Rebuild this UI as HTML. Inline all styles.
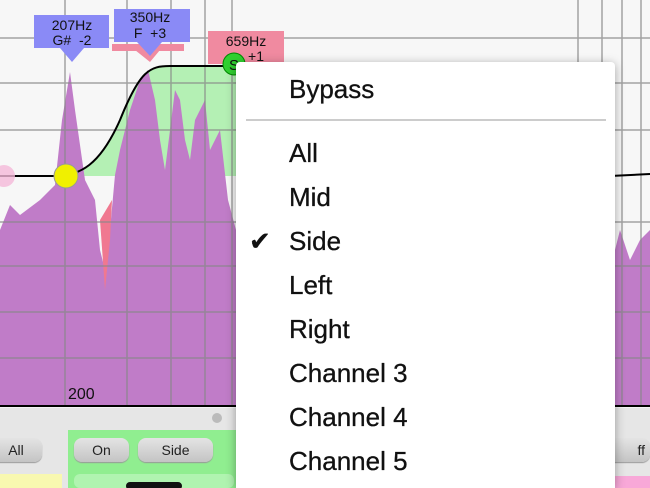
<!DOCTYPE html>
<html style="overflow:hidden;width:650px;height:488px"><head><meta charset="utf-8"><style>
body{margin:0;width:650px;height:488px;overflow:hidden;background:#f4f4f4;font-family:"Liberation Sans",sans-serif;position:relative}
.menu{position:absolute;left:236px;top:62px;width:379px;height:426px;background:#fff;box-shadow:0 2px 10px rgba(0,0,0,.35);border-radius:4px 4px 0 0}
.it{position:absolute;left:53px;font-size:26px;color:#111;line-height:30px;-webkit-text-stroke:0.3px #111}
.btn{position:absolute;height:24px;border-radius:8px;background:linear-gradient(#e4e4e4,#c4c4c4);font-size:14px;text-align:center;line-height:24px;color:#222;box-shadow:0 1px 1px #999}
</style></head><body>
<svg width="650" height="488" style="position:absolute;left:0;top:0">
<rect x="0" y="0" width="650" height="407" fill="#f7f7f7"/>
<path d="M55,176 C80,176 100,165 120,120 C140,70 150,66 170,66 L240,66 L240,176 Z" fill="#b4f0b4"/>
<polygon points="0,407 0,230 10,205 20,215 40,200 55,185 62,120 70,72 75,110 85,180 95,200 100,250 105,270 110,230 115,175 120,150 130,110 140,80 148,70 155,100 160,140 165,170 175,90 180,100 185,140 190,160 195,120 205,100 210,150 220,130 228,200 236,230 236,407" fill="#c07cc8"/>
<polygon points="100,220 105,290 110,240 112,200" fill="#f07890"/>
<polygon points="578,407 578,235 590,250 600,245 610,270 620,230 630,260 640,240 650,230 650,407" fill="#c07cc8"/>
<g stroke="#888" stroke-width="1.5" opacity=".75">
<line x1="0" y1="38" x2="650" y2="38"/><line x1="0" y1="83" x2="650" y2="83"/><line x1="0" y1="130" x2="650" y2="130"/><line x1="0" y1="222" x2="650" y2="222"/><line x1="0" y1="266" x2="650" y2="266"/><line x1="0" y1="312" x2="650" y2="312"/><line x1="0" y1="358" x2="650" y2="358"/>
<line x1="65" y1="0" x2="65" y2="407"/><line x1="127" y1="0" x2="127" y2="407"/><line x1="171" y1="0" x2="171" y2="407"/><line x1="205" y1="0" x2="205" y2="407"/><line x1="232" y1="0" x2="232" y2="407"/><line x1="578" y1="0" x2="578" y2="407"/><line x1="602" y1="0" x2="602" y2="407"/><line x1="622" y1="0" x2="622" y2="407"/><line x1="641" y1="0" x2="641" y2="407"/>
</g>
<path d="M0,176 L55,176 C80,176 100,165 120,120 C140,70 150,66 170,66 L240,66" fill="none" stroke="#000" stroke-width="2"/>
<line x1="610" y1="176" x2="650" y2="174" stroke="#000" stroke-width="2"/>
<line x1="0" y1="406" x2="236" y2="406" stroke="#000" stroke-width="2"/>
<line x1="600" y1="406" x2="650" y2="406" stroke="#000" stroke-width="2"/>
<circle cx="4" cy="176" r="11" fill="#f4b8d8" opacity=".8"/>
<circle cx="66" cy="176" r="12" fill="#f0f000" stroke="#999"/>
<rect x="34" y="15" width="75" height="33" fill="#8a8af6"/><polygon points="60,48 84,48 72,62" fill="#8a8af6"/>
<text x="72" y="30" font-size="14" text-anchor="middle" fill="#111">207Hz</text><text x="72" y="45" font-size="14" text-anchor="middle" fill="#111" xml:space="preserve">G#  -2</text>
<rect x="112" y="44" width="72" height="7" fill="#f08aa0"/>
<polygon points="135,50 160,50 150,62" fill="#f08aa0"/>
<rect x="114" y="9" width="76" height="33" fill="#8a8af6"/><polygon points="137,42 162,42 150,56" fill="#8a8af6"/>
<text x="150" y="22" font-size="14" text-anchor="middle" fill="#111">350Hz</text><text x="150" y="38" font-size="14" text-anchor="middle" fill="#111" xml:space="preserve">F  +3</text>
<rect x="208" y="31" width="76" height="33" fill="#f08aa0"/>
<text x="246" y="46" font-size="14" text-anchor="middle" fill="#111">659Hz</text><text x="256" y="61" font-size="14" text-anchor="middle" fill="#111">+1</text>
<circle cx="234" cy="64" r="11" fill="#30d030" stroke="#080"/>
<text x="234" y="70" font-size="15" text-anchor="middle" fill="#111">S</text>
<text x="68" y="399" font-size="16" fill="#111">200</text>
<rect x="0" y="408" width="650" height="80" fill="#e6e6e6"/>
<rect x="68" y="430" width="168" height="58" fill="#90ee90"/>
<rect x="74" y="474" width="160" height="14" rx="6" fill="#b0f4b0"/>
<rect x="126" y="482" width="56" height="8" rx="4" fill="#111"/>
<rect x="0" y="474" width="62" height="14" fill="#f8f8b0"/>
<circle cx="217" cy="418" r="5" fill="#bbb"/>
<rect x="615" y="476" width="35" height="12" fill="#f8a8d8"/>
</svg>
<div class="btn" style="left:-10px;top:438px;width:52px">All</div>
<div class="btn" style="left:74px;top:438px;width:55px">On</div>
<div class="btn" style="left:138px;top:438px;width:75px">Side</div>
<div class="btn" style="left:600px;top:438px;width:45px;text-align:right;padding-right:5px">ff</div>
<div class="menu">
<div class="it" style="top:12px">Bypass</div>
<div style="position:absolute;left:10px;right:9px;top:57px;height:2px;background:#ccc"></div>
<div class="it" style="top:76px">All</div>
<div class="it" style="top:120px">Mid</div>
<div class="it" style="top:164px;left:13px">✔</div>
<div class="it" style="top:164px">Side</div>
<div class="it" style="top:208px">Left</div>
<div class="it" style="top:252px">Right</div>
<div class="it" style="top:296px">Channel 3</div>
<div class="it" style="top:340px">Channel 4</div>
<div class="it" style="top:384px">Channel 5</div>
</div>
</body></html>
